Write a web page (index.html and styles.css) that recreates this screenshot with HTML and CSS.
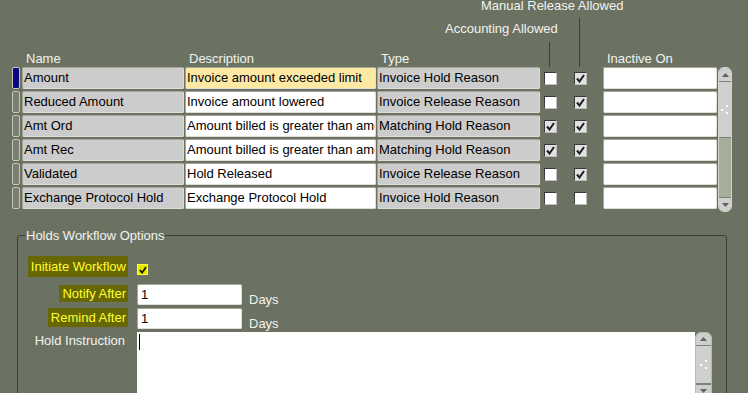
FILE: index.html
```html
<!DOCTYPE html>
<html>
<head>
<meta charset="utf-8">
<link rel="stylesheet" href="styles.css">
</head>
<body>
<div class="hdr">
  <div class="hrow-a">Manual Release Allowed</div>
  <div class="hrow-b"><span class="hl-acct">Accounting Allowed</span><span class="vline"></span></div>
  <div class="hrow-c">
    <span class="hc hc-name">Name</span>
    <span class="hc hc-desc">Description</span>
    <span class="hc hc-type">Type</span>
    <span class="sp1"></span><span class="vline"></span><span class="sp2"></span><span class="vline"></span><span class="sp3"></span>
    <span class="hc hc-inact">Inactive On</span>
  </div>
</div>

<div class="table">
  <div class="rows">
    <div class="row">
      <span class="ind cur"></span>
      <span class="fld f-name">Amount</span>
      <span class="fld f-desc cur">Invoice amount exceeded limit</span>
      <span class="fld f-type">Invoice Hold Reason</span>
      <span class="cb cb1"></span>
      <span class="cb cb2 on"><svg viewBox="0 0 9 9" width="9" height="9"><path d="M1 4.5 L3.5 7.5 L8 1" fill="none" stroke="#1e1e1e" stroke-width="2"/></svg></span>
      <span class="fld f-inact"></span>
    </div>
    <div class="row">
      <span class="ind"></span>
      <span class="fld f-name">Reduced Amount</span>
      <span class="fld f-desc">Invoice amount lowered</span>
      <span class="fld f-type">Invoice Release Reason</span>
      <span class="cb cb1"></span>
      <span class="cb cb2 on"><svg viewBox="0 0 9 9" width="9" height="9"><path d="M1 4.5 L3.5 7.5 L8 1" fill="none" stroke="#1e1e1e" stroke-width="2"/></svg></span>
      <span class="fld f-inact"></span>
    </div>
    <div class="row">
      <span class="ind"></span>
      <span class="fld f-name">Amt Ord</span>
      <span class="fld f-desc">Amount billed is greater than amount ordered</span>
      <span class="fld f-type">Matching Hold Reason</span>
      <span class="cb cb1 on"><svg viewBox="0 0 9 9" width="9" height="9"><path d="M1 4.5 L3.5 7.5 L8 1" fill="none" stroke="#1e1e1e" stroke-width="2"/></svg></span>
      <span class="cb cb2 on"><svg viewBox="0 0 9 9" width="9" height="9"><path d="M1 4.5 L3.5 7.5 L8 1" fill="none" stroke="#1e1e1e" stroke-width="2"/></svg></span>
      <span class="fld f-inact"></span>
    </div>
    <div class="row">
      <span class="ind"></span>
      <span class="fld f-name">Amt Rec</span>
      <span class="fld f-desc">Amount billed is greater than amount received</span>
      <span class="fld f-type">Matching Hold Reason</span>
      <span class="cb cb1 on"><svg viewBox="0 0 9 9" width="9" height="9"><path d="M1 4.5 L3.5 7.5 L8 1" fill="none" stroke="#1e1e1e" stroke-width="2"/></svg></span>
      <span class="cb cb2 on"><svg viewBox="0 0 9 9" width="9" height="9"><path d="M1 4.5 L3.5 7.5 L8 1" fill="none" stroke="#1e1e1e" stroke-width="2"/></svg></span>
      <span class="fld f-inact"></span>
    </div>
    <div class="row">
      <span class="ind"></span>
      <span class="fld f-name">Validated</span>
      <span class="fld f-desc">Hold Released</span>
      <span class="fld f-type">Invoice Release Reason</span>
      <span class="cb cb1"></span>
      <span class="cb cb2 on"><svg viewBox="0 0 9 9" width="9" height="9"><path d="M1 4.5 L3.5 7.5 L8 1" fill="none" stroke="#1e1e1e" stroke-width="2"/></svg></span>
      <span class="fld f-inact"></span>
    </div>
    <div class="row">
      <span class="ind"></span>
      <span class="fld f-name">Exchange Protocol Hold</span>
      <span class="fld f-desc">Exchange Protocol Hold</span>
      <span class="fld f-type">Invoice Hold Reason</span>
      <span class="cb cb1"></span>
      <span class="cb cb2"></span>
      <span class="fld f-inact"></span>
    </div>
  </div>
  <div class="vscroll">
    <div class="sb-btn sb-up"><svg viewBox="0 0 7 4" width="7" height="4"><polygon points="0,4 3.5,0 7,4" fill="#5f6655"/></svg></div>
    <div class="sb-thumb"><svg viewBox="0 0 8 10" width="8" height="10"><rect x="5" y="0" width="2" height="2" fill="#fff"/><rect x="0" y="4" width="2" height="2" fill="#fff"/><rect x="5" y="7" width="2" height="2" fill="#fff"/></svg></div>
    <div class="sb-track"></div>
    <div class="sb-btn sb-down"><svg viewBox="0 0 7 4" width="7" height="4"><polygon points="0,0 7,0 3.5,4" fill="#5f6655"/></svg></div>
  </div>
</div>

<fieldset class="group">
  <legend>Holds Workflow Options</legend>
  <div class="form">
    <div class="frow frow-init">
      <span class="lbl hl lbl-init">Initiate Workflow</span>
      <div class="fcell"><span class="cb-y"><svg viewBox="0 0 9 9" width="9" height="9"><path d="M1 4.5 L3.5 7.5 L8 1" fill="none" stroke="#1a1a00" stroke-width="2"/></svg></span></div>
    </div>
    <div class="frow frow-notify">
      <span class="lbl hl lbl-notify">Notify After</span>
      <div class="fcell"><span class="in">1</span><span class="days">Days</span></div>
    </div>
    <div class="frow frow-remind">
      <span class="lbl hl lbl-remind">Remind After</span>
      <div class="fcell"><span class="in">1</span><span class="days">Days</span></div>
    </div>
    <div class="frow frow-hold">
      <span class="lbl lbl-hold">Hold Instruction</span>
      <div class="fcell">
        <div class="ta"><span class="caret"></span></div>
        <div class="ta-sb">
          <div class="sb-btn sb-up"><svg viewBox="0 0 7 4" width="7" height="4"><polygon points="0,4 3.5,0 7,4" fill="#5f6655"/></svg></div>
          <div class="sb-thumb ta-thumb"><svg viewBox="0 0 8 10" width="8" height="10"><rect x="5" y="0" width="2" height="2" fill="#fff"/><rect x="0" y="4" width="2" height="2" fill="#fff"/><rect x="5" y="7" width="2" height="2" fill="#fff"/></svg></div>
          <div class="sb-btn sb-down"><svg viewBox="0 0 7 4" width="7" height="4"><polygon points="0,0 7,0 3.5,4" fill="#5f6655"/></svg></div>
        </div>
      </div>
    </div>
  </div>
</fieldset>
</body>
</html>
```

FILE: styles.css
```css
* { box-sizing: border-box; }
html, body { margin: 0; padding: 0; }
body {
  width: 748px;
  height: 393px;
  overflow: hidden;
  background: #6b7261;
  font-family: "Liberation Sans", Arial, sans-serif;
  font-size: 13px;
  line-height: 15px;
  color: #000;
}

/* header labels */
.hdr { color: #f2f2f2; white-space: nowrap; }
.hrow-a { height: 21px; margin-top: -2px; padding-left: 481px; }
.hrow-b { height: 23px; display: flex; padding-left: 445px; }
.hl-acct { width: 134px; padding-top: 2px; }
.vline { width: 1px; background: #3b3f33; flex: none; }
.hrow-b .vline { margin-top: -1px; }
.hrow-c { height: 25px; display: flex; padding-left: 22px; }
.hc { padding-top: 9px; padding-left: 4px; flex: none; }
.hc-name { width: 163px; }
.hc-desc { width: 192px; }
.hc-type { width: 163px; }
.sp1 { width: 9px; flex: none; }
.sp2 { width: 29px; flex: none; }
.sp3 { width: 23px; flex: none; }
.hc-inact { padding-left: 4px; }

/* multi-row table */
.table { display: flex; height: 145px; }
.rows { display: flex; flex-direction: column; gap: 2px; padding-left: 12px; }
.row { display: flex; align-items: center; height: 22px; }
.ind {
  width: 8px; height: 22px; flex: none;
  border: 1px solid #c3c6b9; border-radius: 2px;
  background: #7a7f6f; margin-right: 2px;
}
.ind.cur { background: #0a0a80; }
.fld {
  height: 22px; flex: none;
  border: 1px solid; border-color: #a4a898 #dedfd8 #dedfd8 #a4a898;
  border-radius: 2px;
  padding: 0 1px;
  line-height: 20px;
  white-space: nowrap; overflow: hidden;
}
.f-name { width: 162px; background: #cccccc; margin-right: 1px; }
.f-desc { width: 191px; background: #ffffff; margin-right: 1px; }
.f-desc.cur { background: #fde8a4; }
.f-type { width: 163px; background: #cccccc; }
.f-inact { width: 114px; margin-left: 16px; background: #ffffff; }
.cb {
  width: 13px; height: 13px; flex: none;
  border: 1px solid; border-color: #3a3a3a #bdbdbd #bdbdbd #3a3a3a;
  background: #ffffff;
  display: flex; align-items: center; justify-content: center;
}
.cb.on { background: #e2e2e2; }
.cb1 { margin-left: 4px; }
.cb2 { margin-left: 17px; }

/* scrollbars */
.vscroll {
  width: 14px; height: 145px; margin-left: 1px; flex: none;
  display: flex; flex-direction: column;
  border: 1px solid #d2d4cc; border-radius: 6px;
  overflow: hidden; background: #a8ad9b;
}
.sb-btn {
  height: 14px; flex: none; background: #cfcfcf;
  display: flex; align-items: center; justify-content: center;
}
.sb-up { border-bottom: 1px solid #7d8272; }
.sb-down { border-top: 1px solid #7d8272; }
.sb-thumb {
  height: 56px; flex: none; background: #cfcfcf;
  border-bottom: 1px solid #7d8272;
  display: flex; align-items: center; justify-content: center;
}
.sb-track { flex: 1; }

/* group box */
.group {
  margin: 16px 0 0 17px;
  width: 710px; height: 220px; min-width: 0;
  padding: 0;
  border: 1px solid #3c4034; border-radius: 3px;
}
.group legend {
  margin-left: 7px; padding: 0 1px;
  color: #f2f2f2; line-height: 15px;
}
.form { margin-top: 13px; display: flex; flex-direction: column; }
.frow {
  display: grid; grid-template-columns: 110px auto; column-gap: 9px;
  height: 21px; align-items: start;
}
.frow-notify { margin-top: 7px; }
.frow-remind { margin-top: 3px; }
.frow-hold { margin-top: 3px; height: auto; }
.lbl { justify-self: end; color: #f2f2f2; white-space: nowrap; }
.hl { background: #676706; color: #ffff2a; padding: 0 2px 0 3px; }
.lbl-init { height: 21px; line-height: 21px; }
.lbl-notify { margin-top: 1px; height: 17px; line-height: 17px; }
.lbl-remind { height: 19px; line-height: 19px; }
.lbl-hold { padding-top: 1px; padding-right: 3px; }

.fcell { display: flex; align-items: flex-start; height: 100%; }
.cb-y {
  width: 11px; height: 11px; margin-top: 8px;
  border: 1px solid #ffff33; background: #e6e600;
  display: flex; align-items: center; justify-content: center;
}
.cb-y svg { width: 8px; height: 8px; }
.in {
  width: 105px; height: 21px; flex: none;
  background: #ffffff;
  border: 1px solid; border-color: #a4a898 #dedfd8 #dedfd8 #a4a898;
  border-radius: 2px;
  padding-left: 3px; line-height: 19px;
}
.days { margin-left: 7px; align-self: flex-end; margin-bottom: -2px; color: #f2f2f2; }

.ta { width: 558px; height: 80px; background: #ffffff; padding: 2px 0 0 2px; flex: none; }
.caret { display: block; width: 1px; height: 16px; background: #000; }
.ta-sb {
  width: 17px; height: 80px; flex: none;
  display: flex; flex-direction: column;
  border: 1px solid #b8bcae; border-radius: 6px 6px 0 0;
  background: #a8ad9b; overflow: hidden;
}
.ta-sb .sb-btn { height: 13px; }
.ta-thumb { height: 38px; }
```
